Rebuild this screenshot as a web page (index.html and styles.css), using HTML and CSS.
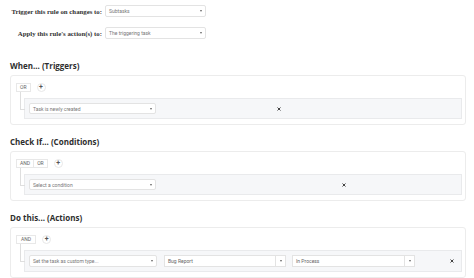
FILE: index.html
```html
<!DOCTYPE html>
<html lang="en">
<head>
  <meta charset="UTF-8" />
  <meta name="viewport" content="width=device-width, initial-scale=1.0"/>
  <title>Automation rule</title>
  <link rel="stylesheet" href="styles.css">
</head>
<body>
  <div class="page">

    <div class="scope">
      <div class="scope-row">
        <label class="scope-label">Trigger this rule on changes to:</label>
        <div class="select scope-select"><span>Subtasks</span><i class="caret"></i></div>
      </div>
      <div class="scope-row">
        <label class="scope-label">Apply this rule's action(s) to:</label>
        <div class="select scope-select"><span>The triggering task</span><i class="caret"></i></div>
      </div>
    </div>

    <h2 class="section-title first">When... (Triggers)</h2>
    <div class="rule-box">
      <div class="logic">
        <div class="btn-group">
          <span class="logic-btn">OR</span>
        </div>
        <span class="add-btn">+</span>
      </div>
      <div class="rule-row">
        <div class="select select-main"><span>Task is newly created</span><i class="caret"></i></div>
        <span class="remove remove-trigger">
          <svg width="4" height="4" viewBox="0 0 4 4"><path d="M0.5 0.5L3.5 3.5M3.5 0.5L0.5 3.5" stroke="#444" stroke-width="1"/></svg>
        </span>
      </div>
    </div>

    <h2 class="section-title">Check If... (Conditions)</h2>
    <div class="rule-box">
      <div class="logic">
        <div class="btn-group">
          <span class="logic-btn">AND</span>
          <span class="logic-btn">OR</span>
        </div>
        <span class="add-btn">+</span>
      </div>
      <div class="rule-row">
        <div class="select select-main"><span>Select a condition</span><i class="caret"></i></div>
        <span class="remove remove-condition">
          <svg width="4" height="4" viewBox="0 0 4 4"><path d="M0.5 0.5L3.5 3.5M3.5 0.5L0.5 3.5" stroke="#444" stroke-width="1"/></svg>
        </span>
      </div>
    </div>

    <h2 class="section-title">Do this... (Actions)</h2>
    <div class="rule-box">
      <div class="logic">
        <div class="btn-group">
          <span class="logic-btn wide">AND</span>
        </div>
        <span class="add-btn">+</span>
      </div>
      <div class="rule-row action-row">
        <div class="select select-main"><span>Set the task as custom type...</span><i class="caret"></i></div>
        <div class="combo combo-type">
          <div class="combo-input">Bug Report</div>
          <div class="combo-btn"><i class="caret"></i></div>
        </div>
        <div class="combo combo-status">
          <div class="combo-input">In Process</div>
          <div class="combo-btn"><i class="caret"></i></div>
        </div>
        <span class="remove remove-action">
          <svg width="4" height="4" viewBox="0 0 4 4"><path d="M0.5 0.5L3.5 3.5M3.5 0.5L0.5 3.5" stroke="#444" stroke-width="1"/></svg>
        </span>
      </div>
    </div>

  </div>
</body>
</html>
```

FILE: styles.css
```css
body {
  margin: 0;
  font-family: Roboto, "Liberation Sans", sans-serif;
  color: #333;
  background-color: #fff;
}

.page {
  padding: 5px 8px 0 10px;
}

/* scope selects at the top */
.scope {
  display: flex;
  flex-direction: column;
  gap: 10px;
}

.scope-row {
  display: flex;
  align-items: center;
}

.scope-label {
  width: 92px;
  margin-right: 3px;
  text-align: right;
  font-family: "Liberation Serif", serif;
  font-weight: bold;
  font-size: 6.8px;
  white-space: nowrap;
  color: #333;
}

.scope-select {
  width: 101px;
  height: 12px;
}

/* generic select */
.select {
  display: flex;
  align-items: center;
  justify-content: space-between;
  box-sizing: border-box;
  padding: 0 3px;
  background-color: #fff;
  border: 1px solid #e3e3e3;
  border-radius: 2px;
  font-size: 5px;
  color: #777;
}

.caret {
  display: block;
  width: 0;
  height: 0;
  border-left: 1.5px solid transparent;
  border-right: 1.5px solid transparent;
  border-top: 2px solid #666;
}

/* sections */
.section-title {
  margin: 12px 0 4px;
  font-family: "Open Sans", sans-serif;
  font-weight: 700;
  font-size: 8px;
  line-height: 10px;
  color: #2e2e2e;
}

.section-title.first {
  margin-top: 22px;
}

.rule-box {
  padding: 7px 3px 5px 5px;
  border: 1px solid #ececec;
  border-radius: 3px;
}

.logic {
  display: flex;
  align-items: center;
  gap: 6px;
  height: 9px;
}

.btn-group {
  display: flex;
}

.logic-btn {
  box-sizing: border-box;
  height: 9px;
  padding: 0 3px;
  background-color: #fff;
  border: 1px solid #e8e8e8;
  font-size: 5px;
  line-height: 7px;
  color: #666;
}

.logic-btn + .logic-btn {
  border-left: none;
}

.logic-btn.wide {
  padding: 0 4px;
}

.add-btn {
  box-sizing: border-box;
  width: 9px;
  height: 9px;
  border: 1px solid #e8e8e8;
  border-radius: 50%;
  text-align: center;
  font-size: 7px;
  font-weight: bold;
  line-height: 7px;
  color: #555;
}

.rule-row {
  position: relative;
  display: flex;
  align-items: center;
  margin: 6px 0 0 8px;
  padding: 4px;
  background-color: #f6f7f9;
  border: 1px solid #e9eaec;
}

/* connector from the logic buttons to the row */
.rule-row::before {
  content: "";
  position: absolute;
  left: -5px;
  top: -7px;
  width: 4px;
  height: 17px;
  border-left: 1px solid #dedede;
  border-bottom: 1px solid #dedede;
}

.select-main {
  width: 127px;
  height: 11px;
}

.action-row .select-main {
  width: 128px;
  height: 12px;
}

.combo {
  display: flex;
  height: 12px;
  margin-left: 7px;
  font-size: 5px;
  color: #666;
}

.combo-input {
  display: flex;
  align-items: center;
  flex: 1;
  padding: 0 3px;
  background-color: #fff;
  border: 1px solid #e3e3e3;
  border-right: none;
}

.combo-btn {
  display: flex;
  align-items: center;
  justify-content: center;
  width: 9px;
  background-color: #fff;
  border: 1px solid #e3e3e3;
}

.combo-type {
  width: 122px;
}

.combo-status {
  width: 123px;
  margin-left: 6px;
}

.remove {
  display: flex;
  align-items: center;
  justify-content: center;
  width: 6px;
  height: 6px;
}

.remove-trigger {
  margin-left: 120px;
}

.remove-condition {
  margin-left: 185px;
}

.remove-action {
  margin-left: 34px;
}
```
